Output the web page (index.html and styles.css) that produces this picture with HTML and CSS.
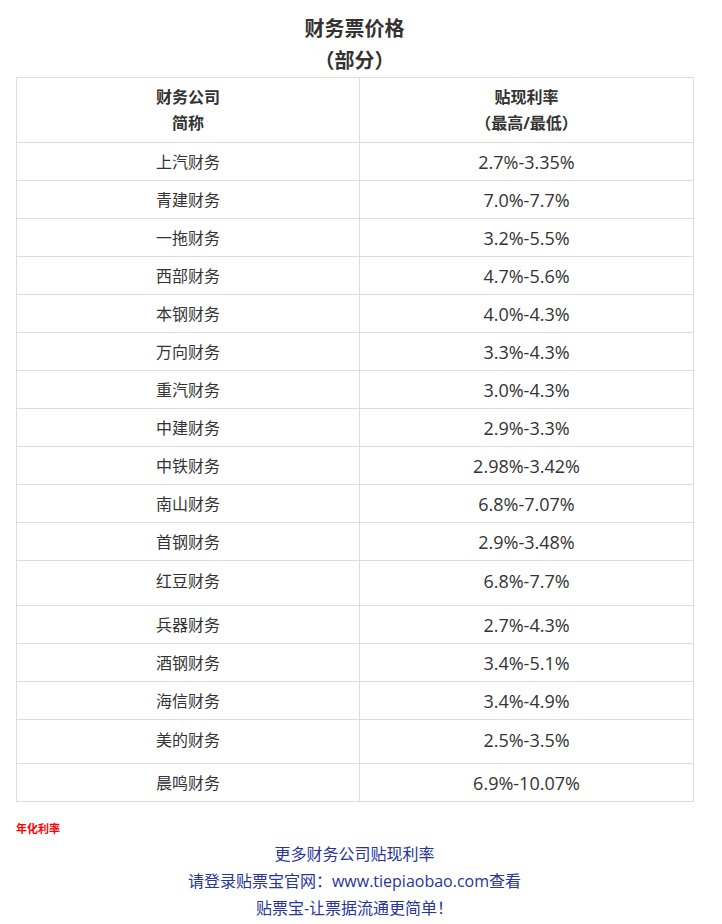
FILE: index.html
```html
<!DOCTYPE html>
<html lang="zh-CN">
<head>
<meta charset="utf-8">
<link rel="stylesheet" href="styles.css">
</head>
<body>
<div class="page">
  <h1 class="title">财务票价格<br>（部分）</h1>
  <table class="rates">
    <colgroup><col class="c1"><col class="c2"></colgroup>
    <thead>
      <tr><th>财务公司<br>简称</th><th>贴现利率<br>（最高/最低）</th></tr>
    </thead>
    <tbody>
      <tr><td>上汽财务</td><td class="num">2.7%-3.35%</td></tr>
      <tr><td>青建财务</td><td class="num">7.0%-7.7%</td></tr>
      <tr><td>一拖财务</td><td class="num">3.2%-5.5%</td></tr>
      <tr><td>西部财务</td><td class="num">4.7%-5.6%</td></tr>
      <tr><td>本钢财务</td><td class="num">4.0%-4.3%</td></tr>
      <tr><td>万向财务</td><td class="num">3.3%-4.3%</td></tr>
      <tr><td>重汽财务</td><td class="num">3.0%-4.3%</td></tr>
      <tr><td>中建财务</td><td class="num">2.9%-3.3%</td></tr>
      <tr><td>中铁财务</td><td class="num">2.98%-3.42%</td></tr>
      <tr><td>南山财务</td><td class="num">6.8%-7.07%</td></tr>
      <tr><td>首钢财务</td><td class="num">2.9%-3.48%</td></tr>
      <tr class="tall"><td>红豆财务</td><td class="num">6.8%-7.7%</td></tr>
      <tr><td>兵器财务</td><td class="num">2.7%-4.3%</td></tr>
      <tr><td>酒钢财务</td><td class="num">3.4%-5.1%</td></tr>
      <tr><td>海信财务</td><td class="num">3.4%-4.9%</td></tr>
      <tr class="tall2"><td>美的财务</td><td class="num">2.5%-3.5%</td></tr>
      <tr><td>晨鸣财务</td><td class="num">6.9%-10.07%</td></tr>
    </tbody>
  </table>
  <p class="note">年化利率</p>
  <div class="promo">
    <p>更多财务公司贴现利率</p>
    <p>请登录贴票宝官网：www.tiepiaobao.com查看</p>
    <p>贴票宝-让票据流通更简单！</p>
  </div>
</div>
</body>
</html>
```

FILE: styles.css
```css
html, body {
  margin: 0;
  padding: 0;
  background: #fff;
}
body {
  font-family: "Open Sans", "Noto Sans CJK SC", sans-serif;
  color: #333;
}
.page {
  width: 677px;
  padding: 13px 29px 0 16px;
}
.title {
  margin: 0;
  text-align: center;
  font-size: 20px;
  font-weight: bold;
  line-height: 32px;
}
.rates {
  width: 677px;
  border-collapse: collapse;
  table-layout: fixed;
}
.c1 { width: 343px; }
.c2 { width: 334px; }
.rates th, .rates td {
  border: 1px solid #ddd;
  text-align: center;
  padding: 0;
}
.rates th {
  height: 52px;
  padding: 6px 0;
  font-size: 16px;
  font-weight: bold;
  line-height: 26px;
}
.rates td {
  height: 37px;
  font-size: 16px;
  line-height: 20px;
}
.rates td.num {
  font-size: 18px;
}
.rates tr.tall td { height: 39px; padding-bottom: 5px; }
.rates tr.tall2 td { height: 39px; padding-bottom: 4px; }
.note {
  margin: 18px 0 0;
  color: #f00;
  font-size: 11px;
  font-weight: bold;
  line-height: 18px;
}
.promo {
  margin-top: 3px;
  text-align: center;
  color: #27349c;
  font-size: 16px;
}
.promo p {
  margin: 0;
  line-height: 27px;
}
```
